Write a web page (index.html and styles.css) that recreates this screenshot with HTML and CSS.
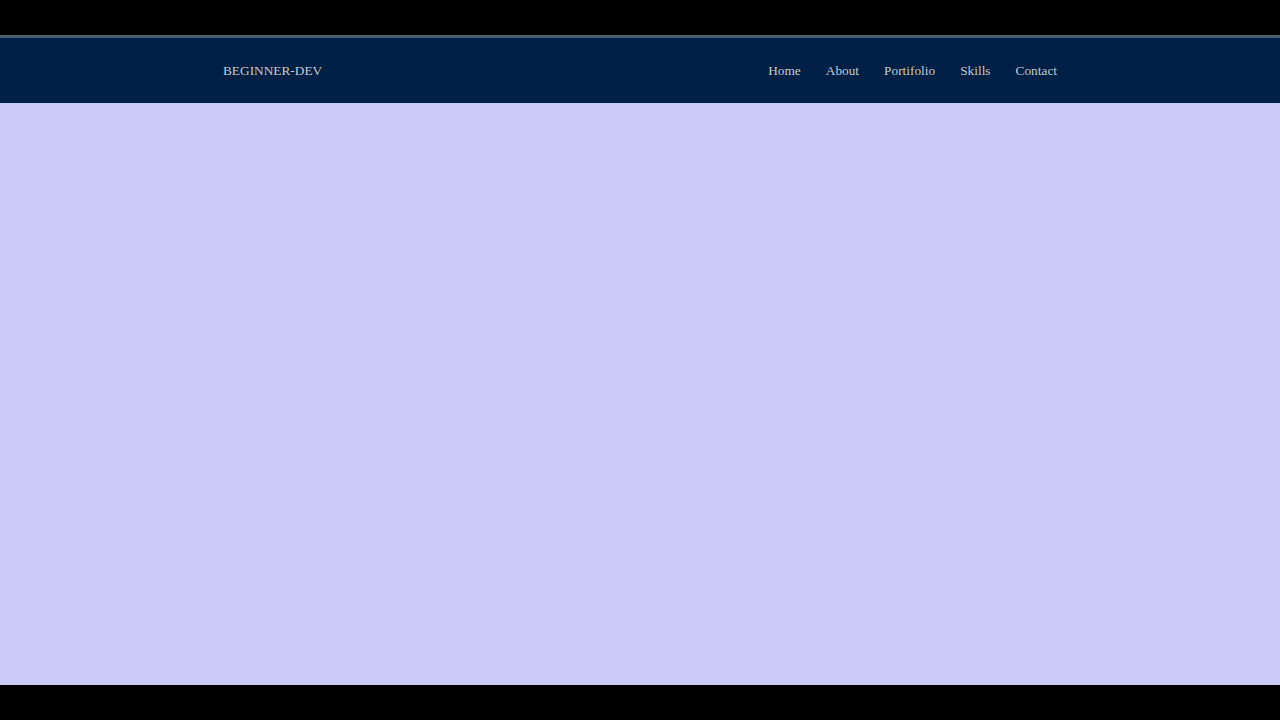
FILE: index.html
```html
<!DOCTYPE html>
<html lang="en">
<head>
<meta charset="utf-8">
<title>Beginner-Dev</title>
<link rel="stylesheet" href="styles.css">
</head>
<body>
<div class="page">
  <header class="header">
    <div class="logo">BEGINNER-DEV</div>
    <ul class="nav">
      <li><a href="#">Home</a></li>
      <li><a href="#">About</a></li>
      <li><a href="#">Portifolio</a></li>
      <li><a href="#">Skills</a></li>
      <li><a href="#">Contact</a></li>
    </ul>
  </header>
  <main class="hero"></main>
</div>
</body>
</html>
```

FILE: styles.css
```css
html, body {
  margin: 0;
  padding: 0;
  height: 100%;
  background: #000000;
}
body {
  font-family: "Liberation Serif", "Times New Roman", serif;
  font-size: 13.33px;
}
.page {
  padding-top: 35px;
  display: flex;
  flex-direction: column;
  height: 720px;
  box-sizing: border-box;
}
.header {
  height: 65px;
  background: #002145;
  border-top: 3px solid #4d5d6b;
  display: flex;
  align-items: center;
  justify-content: space-around;
  color: #c6cedd;
  text-shadow: 0 0 1px rgba(0, 0, 0, 0.6);
}
.logo {
  letter-spacing: 0;
}
.nav {
  list-style: none;
  margin: 0;
  padding: 0;
  display: flex;
  gap: 25px;
}
.nav a {
  color: #c6cedd;
  text-decoration: none;
}
.hero {
  height: 582px;
  background: #c9caf7;
}
```
